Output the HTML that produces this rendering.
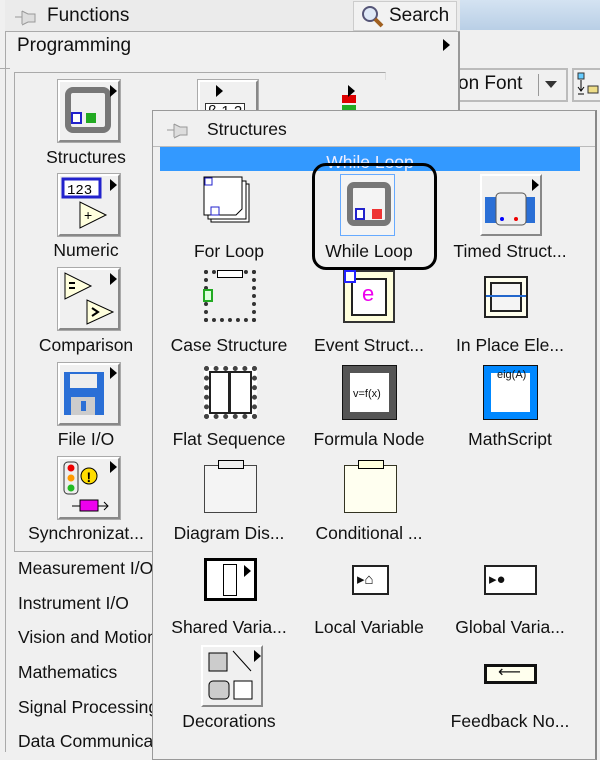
<!DOCTYPE html><html><head><meta charset="utf-8"><style>
body{margin:0;width:600px;height:752px;overflow:hidden;background:#f0f0f0;position:relative;font-family:"Liberation Sans","DejaVu Sans",sans-serif;color:#111}
div,span,svg{position:absolute;box-sizing:border-box}
.t{font-size:17.5px;white-space:nowrap;line-height:22px}
.c{transform:translateX(-50%)}
.ib{width:62px;height:62px;border:2px solid;border-color:#fff #888 #888 #fff;background:#f0f0f0;box-shadow:0 0 0 1px #aaa}
.ar{width:0;height:0;border-left:7px solid #000;border-top:6px solid transparent;border-bottom:6px solid transparent}
</style></head><body>
<!-- background right area -->
<div style="left:455px;top:0;width:145px;height:30px;background:linear-gradient(#d4e3f2,#b9cfe6)"></div>
<div style="left:455px;top:30px;width:145px;height:80px;background:#f0f0f0"></div>
<div style="left:440px;top:68px;width:128px;height:34px;border:2px solid #bbb;background:#f0f0f0"></div>
<div class="t" style="left:458px;top:73px;font-size:19px">on Font</div>
<div style="left:538px;top:74px;width:1px;height:22px;background:#999"></div>
<div class="ar" style="left:545px;top:81px;border:6px solid transparent;border-top:7px solid #333;border-bottom:0"></div>
<div style="left:572px;top:68px;width:40px;height:34px;border:2px solid #bbb"></div>
<svg style="left:576px;top:72px" width="24" height="24"><rect x="2" y="1" width="6" height="6" fill="#6cf" stroke="#333"/><path d="M5 8v10M2 15l3 4 3-4M2 22h6" stroke="#000" fill="none"/><rect x="12" y="14" width="10" height="7" fill="#eedd88" stroke="#333"/></svg>

<!-- Functions palette -->
<div style="left:5px;top:0;width:455px;height:752px;background:#f0f0f0;border-left:1px solid #aaa;border-right:2px solid #999"></div>
<div style="left:5px;top:0;width:455px;height:32px;background:#ebebeb;border-bottom:1px solid #aaa"></div>
<svg style="left:14px;top:6px" width="24" height="22"><path d="M1 11h7M8 5v13M8 5l6 3h7v8h-7l-6 3" stroke="#999" fill="#ddd"/></svg>
<div class="t" style="left:47px;top:5px;font-size:19px">Functions</div>
<div style="left:353px;top:1px;width:104px;height:30px;background:#f2f2f2;border:1px solid #ccc"></div>
<svg style="left:360px;top:4px" width="26" height="26"><circle cx="10" cy="10" r="7" fill="#dfe9f7" stroke="#557" stroke-width="2"/><path d="M15 15l7 7" stroke="#a06020" stroke-width="4"/></svg>
<div class="t" style="left:389px;top:5px;font-size:19px">Search</div>
<div class="t" style="left:17px;top:35px;font-size:19px">Programming</div>
<div class="ar" style="left:443px;top:39px"></div>
<div style="left:14px;top:72px;width:372px;height:480px;border:1px solid #aaa;border-right-color:#ddd"></div>
<div style="left:0;top:68px;width:10px;height:1px;background:#aaa"></div>

<!-- left column icons -->
<div class="ib" style="left:58px;top:80px"><svg width="58" height="58"><rect x="8" y="8" width="40" height="40" rx="5" fill="none" stroke="#777" stroke-width="6"/><rect x="12" y="31" width="9" height="10" fill="#fff" stroke="#22c" stroke-width="2"/><rect x="26" y="31" width="10" height="10" fill="#2a2" /></svg></div>
<div class="ar" style="left:110px;top:85px"></div>
<div class="t c" style="left:86px;top:146px">Structures</div>
<div class="ib" style="left:58px;top:174px"><svg width="58" height="58"><rect x="3" y="3" width="37" height="18" fill="#fff" stroke="#22c" stroke-width="3"/><text x="7" y="18" font-size="14" font-family="Liberation Mono">123</text><path d="M20 26v26l26-13z" fill="#ffd" stroke="#000"/><text x="24" y="44" font-size="14">+</text></svg></div>
<div class="ar" style="left:110px;top:179px"></div>
<div class="t c" style="left:86px;top:239px">Numeric</div>
<div class="ib" style="left:58px;top:268px"><svg width="58" height="58"><path d="M5 3v26l26-13z" fill="#ffd" stroke="#000"/><path d="M9 13h6M9 18h6" stroke="#000" stroke-width="2"/><path d="M27 30v24l26-12z" fill="#ffd" stroke="#000"/><path d="M32 38l6 4-6 4" stroke="#000" fill="none" stroke-width="2"/></svg></div>
<div class="ar" style="left:110px;top:273px"></div>
<div class="t c" style="left:86px;top:334px">Comparison</div>
<div class="ib" style="left:58px;top:363px"><svg width="58" height="58"><rect x="4" y="7" width="40" height="43" fill="#2a6fd6"/><rect x="10" y="9" width="27" height="14" fill="#eee"/><rect x="11" y="32" width="24" height="18" fill="#ccc"/><rect x="21" y="36" width="5" height="10" fill="#2a6fd6"/></svg></div>
<div class="ar" style="left:110px;top:367px"></div>
<div class="t c" style="left:86px;top:428px">File I/O</div>
<div class="ib" style="left:58px;top:457px"><svg width="58" height="58"><rect x="4" y="3" width="14" height="32" rx="4" fill="#eee" stroke="#333"/><circle cx="11" cy="9" r="3.5" fill="#e00"/><circle cx="11" cy="19" r="3.5" fill="#f90"/><circle cx="11" cy="29" r="3.5" fill="#2b2"/><circle cx="29" cy="17" r="8" fill="#fd0" stroke="#000"/><text x="26.5" y="23" font-size="14" font-weight="bold">!</text><path d="M12 47h36M44 43l4 4-4 4" stroke="#000" fill="none"/><rect x="20" y="41" width="18" height="11" fill="#e0e" stroke="#000"/></svg></div>
<div class="ar" style="left:110px;top:461px"></div>
<div class="t c" style="left:86px;top:522px">Synchronizat...</div>
<div class="ib" style="left:198px;top:80px;width:60px"></div>
<div class="t" style="left:205px;top:103px;font-size:15px;border:1px solid #333;background:#fff;padding:0 2px;line-height:16px">ß 1 2</div>
<div class="ar" style="left:216px;top:85px"></div>
<div class="ib" style="left:340px;top:80px;width:60px;border-color:#f0f0f0;box-shadow:none"></div>
<div style="left:342px;top:95px;width:14px;height:8px;background:#d00"></div>
<div style="left:342px;top:105px;width:14px;height:5px;background:#2a2"></div>
<div class="ar" style="left:348px;top:85px"></div>

<div class="t" style="left:18px;top:557px">Measurement I/O</div>
<div class="t" style="left:18px;top:592px">Instrument I/O</div>
<div class="t" style="left:18px;top:626px">Vision and Motion</div>
<div class="t" style="left:18px;top:661px">Mathematics</div>
<div class="t" style="left:18px;top:696px">Signal Processing</div>
<div class="t" style="left:18px;top:730px">Data Communication</div>

<!-- Structures palette -->
<div style="left:152px;top:110px;width:445px;height:650px;background:#f0f0f0;border:1px solid #999;border-right:2px solid #888;overflow:hidden">
<div style="left:0;top:0;width:445px;height:36px;border-bottom:1px solid #bbb"></div>
<svg style="left:13px;top:8px" width="24" height="22"><path d="M1 11h7M8 5v13M8 5l6 3h7v8h-7l-6 3" stroke="#999" fill="#ddd"/></svg>
<div class="t" style="left:54px;top:7px">Structures</div>
<div style="left:7px;top:36px;width:420px;height:24px;background:#3399ff;overflow:hidden"><div class="t c" style="left:210px;top:4px;color:#eef">While Loop</div></div>
</div>

<!-- row 1 -->
<svg style="left:203px;top:176px" width="52" height="56"><path d="M8 8h38v38h-38z" fill="#fff" stroke="#000"/><path d="M5 5h38v38h-38z" fill="#fff" stroke="#000"/><path d="M1 1h38v32l-6 6h-32z" fill="#fff" stroke="#000"/><rect x="2" y="2" width="7" height="7" fill="#fff" stroke="#22c"/><rect x="8" y="31" width="8" height="8" fill="#fff" stroke="#22c"/></svg>
<div class="t c" style="left:229px;top:240px">For Loop</div>
<div style="left:312px;top:163px;width:125px;height:107px;border:3px solid #000;border-radius:14px"></div>
<div style="left:340px;top:174px;width:55px;height:62px;border:1px solid #6af;background:#f4f4f4"></div>
<svg style="left:344px;top:179px" width="48" height="52"><rect x="6" y="6" width="38" height="38" rx="4" fill="none" stroke="#777" stroke-width="6"/><rect x="12" y="30" width="8" height="10" fill="#fff" stroke="#22c" stroke-width="2"/><rect x="28" y="30" width="10" height="10" fill="#e33"/></svg>
<div class="t c" style="left:369px;top:240px">While Loop</div>
<div class="ib" style="left:480px;top:174px;width:62px;height:62px;box-shadow:none"><svg width="58" height="58"><rect x="3" y="21" width="50" height="26" fill="#2a6fd6"/><rect x="14" y="17" width="30" height="32" rx="4" fill="#eee" stroke="#555"/><circle cx="20" cy="43" r="2" fill="#00f"/><circle cx="34" cy="43" r="2" fill="#e00"/></svg></div>
<div class="ar" style="left:532px;top:179px"></div>
<div class="t c" style="left:510px;top:240px">Timed Struct...</div>
<!-- row 2 -->
<div style="left:204px;top:270px;width:52px;height:52px;border:4px dotted #333"></div>
<div style="left:217px;top:270px;width:26px;height:8px;border:1px solid #000;background:#fff"></div>
<div style="left:203px;top:289px;width:10px;height:13px;border:2px solid #2a2;background:#dfd"></div>
<div class="t c" style="left:229px;top:334px">Case Structure</div>
<div style="left:343px;top:270px;width:52px;height:53px;border:2px solid #333;background:#ffd"><div style="left:6px;top:6px;width:36px;height:38px;border:2px solid #222;background:#fff"></div></div>
<div style="left:344px;top:270px;width:12px;height:13px;border:2px solid #22f;background:#fff"></div>
<div class="t" style="left:362px;top:283px;color:#e0e;font-size:22px">e</div>
<div class="t c" style="left:369px;top:334px">Event Struct...</div>
<div style="left:484px;top:276px;width:44px;height:42px;border:2px solid #222;background:#ffe"><div style="left:4px;top:4px;width:32px;height:30px;border:2px solid #222;background:#f4f4f4"></div></div>
<div style="left:486px;top:295px;width:40px;height:2px;background:#26c"></div>
<div class="t c" style="left:510px;top:334px">In Place Ele...</div>
<!-- row 3 -->
<div style="left:204px;top:366px;width:53px;height:53px;border:5px dotted #444;background:#fff"><div style="left:0;top:0;width:21px;height:43px;border:2px solid #222"></div><div style="left:20px;top:0;width:23px;height:43px;border:2px solid #222"></div></div>
<div class="t c" style="left:229px;top:428px">Flat Sequence</div>
<div style="left:343px;top:366px;width:53px;height:53px;border:7px solid #555;background:#fff;outline:1px solid #111"></div>
<div class="t" style="left:353px;top:388px;font-size:11px;line-height:12px">v=f(x)</div>
<div class="t c" style="left:369px;top:428px">Formula Node</div>
<div style="left:484px;top:366px;width:53px;height:53px;border:7px solid #08f;background:#fff;outline:1px solid #111"></div>
<div class="t" style="left:497px;top:369px;font-size:11px;line-height:12px">eig(A)</div>
<div class="t c" style="left:510px;top:428px">MathScript</div>
<!-- row 4 -->
<div style="left:204px;top:465px;width:53px;height:48px;border:1px solid #444;background:#f4f4f4"></div>
<div style="left:218px;top:460px;width:26px;height:9px;border:1px solid #000;background:#eee"></div>
<div class="t c" style="left:229px;top:522px">Diagram Dis...</div>
<div style="left:344px;top:465px;width:53px;height:48px;border:1px solid #332;background:#fffff0"></div>
<div style="left:358px;top:460px;width:26px;height:9px;border:1px solid #000;background:#ffd"></div>
<div class="t c" style="left:369px;top:522px">Conditional ...</div>
<!-- row 5 -->
<div style="left:204px;top:558px;width:53px;height:43px;border:3px solid #000;background:#fff"><div style="left:16px;top:3px;width:14px;height:32px;border:1px solid #000"></div><div class="ar" style="left:37px;top:4px"></div></div>
<div class="t c" style="left:229px;top:616px">Shared Varia...</div>
<div style="left:352px;top:565px;width:37px;height:30px;border:2px solid #222;background:#fff"></div>
<div class="t" style="left:357px;top:569px;font-size:15px">▸⌂</div>
<div class="t c" style="left:369px;top:616px">Local Variable</div>
<div style="left:484px;top:565px;width:53px;height:30px;border:2px solid #222;background:#fff"></div>
<div class="t" style="left:489px;top:569px;font-size:15px">▸●</div>
<div class="t c" style="left:510px;top:616px">Global Varia...</div>
<!-- row 6 -->
<div class="ib" style="left:201px;top:645px;width:62px;height:62px;box-shadow:none"><svg width="58" height="58"><rect x="6" y="6" width="18" height="18" fill="#ccc" stroke="#000"/><path d="M30 4l18 20" stroke="#000"/><rect x="6" y="34" width="20" height="18" rx="4" fill="#ccc" stroke="#000"/><rect x="31" y="34" width="18" height="18" fill="#fff" stroke="#000"/></svg></div>
<div class="ar" style="left:254px;top:650px"></div>
<div class="t c" style="left:229px;top:710px">Decorations</div>
<div style="left:484px;top:664px;width:53px;height:20px;border:3px solid #111;background:#ffe"></div>
<div class="t" style="left:498px;top:662px;font-size:16px">⟵</div>
<div class="t c" style="left:510px;top:710px">Feedback No...</div>
</body></html>
